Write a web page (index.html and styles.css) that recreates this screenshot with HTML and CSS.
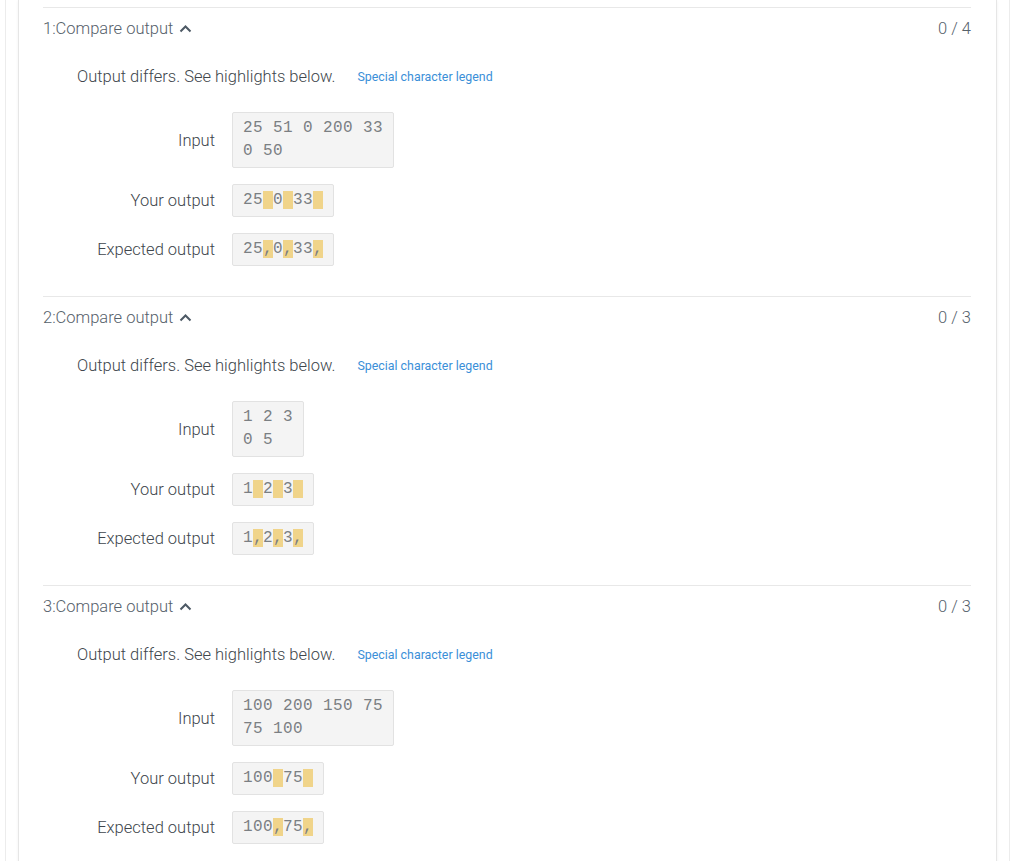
FILE: index.html
```html
<!DOCTYPE html>
<html lang="en">
<head>
  <meta charset="UTF-8">
  <meta name="viewport" content="width=device-width, initial-scale=1.0">
  <title>Compare output</title>
  <link rel="stylesheet" href="styles.css">
</head>
<body>
  <div class="frame">
    <div class="card">

      <section class="test">
        <div class="test-head">
          <span class="test-name">1:Compare output
            <svg class="chevron" width="13" height="9" viewBox="0 0 13 9"><path d="M1.5 7.5 L6.5 2.5 L11.5 7.5" fill="none" stroke="#4d5965" stroke-width="2"/></svg>
          </span>
          <span class="score">0 / 4</span>
        </div>
        <div class="message">
          <span>Output differs. See highlights below.</span>
          <a class="legend" href="#">Special character legend</a>
        </div>
        <div class="rows">
          <div class="row">
            <div class="label">Input</div>
            <pre class="out">25 51 0 200 33
0 50</pre>
          </div>
          <div class="row">
            <div class="label">Your output</div>
            <pre class="out">25<span class="hl"> </span>0<span class="hl"> </span>33<span class="hl"> </span></pre>
          </div>
          <div class="row">
            <div class="label">Expected output</div>
            <pre class="out">25<span class="hl">,</span>0<span class="hl">,</span>33<span class="hl">,</span></pre>
          </div>
        </div>
      </section>

      <section class="test">
        <div class="test-head">
          <span class="test-name">2:Compare output
            <svg class="chevron" width="13" height="9" viewBox="0 0 13 9"><path d="M1.5 7.5 L6.5 2.5 L11.5 7.5" fill="none" stroke="#4d5965" stroke-width="2"/></svg>
          </span>
          <span class="score">0 / 3</span>
        </div>
        <div class="message">
          <span>Output differs. See highlights below.</span>
          <a class="legend" href="#">Special character legend</a>
        </div>
        <div class="rows">
          <div class="row">
            <div class="label">Input</div>
            <pre class="out">1 2 3
0 5</pre>
          </div>
          <div class="row">
            <div class="label">Your output</div>
            <pre class="out">1<span class="hl"> </span>2<span class="hl"> </span>3<span class="hl"> </span></pre>
          </div>
          <div class="row">
            <div class="label">Expected output</div>
            <pre class="out">1<span class="hl">,</span>2<span class="hl">,</span>3<span class="hl">,</span></pre>
          </div>
        </div>
      </section>

      <section class="test">
        <div class="test-head">
          <span class="test-name">3:Compare output
            <svg class="chevron" width="13" height="9" viewBox="0 0 13 9"><path d="M1.5 7.5 L6.5 2.5 L11.5 7.5" fill="none" stroke="#4d5965" stroke-width="2"/></svg>
          </span>
          <span class="score">0 / 3</span>
        </div>
        <div class="message">
          <span>Output differs. See highlights below.</span>
          <a class="legend" href="#">Special character legend</a>
        </div>
        <div class="rows">
          <div class="row">
            <div class="label">Input</div>
            <pre class="out">100 200 150 75
75 100</pre>
          </div>
          <div class="row">
            <div class="label">Your output</div>
            <pre class="out">100<span class="hl"> </span>75<span class="hl"> </span></pre>
          </div>
          <div class="row">
            <div class="label">Expected output</div>
            <pre class="out">100<span class="hl">,</span>75<span class="hl">,</span></pre>
          </div>
        </div>
      </section>

    </div>
  </div>
</body>
</html>
```

FILE: styles.css
```css
body {
  margin: 0;
  background-color: #ffffff;
  font-family: Roboto, "Liberation Sans", sans-serif;
  font-weight: 300;
  color: #474d53;
}
.frame {
  margin-left: 5px;
  width: 1003px;
  border-left: 1px solid #ececec;
  border-right: 1px solid #ececec;
  min-height: 861px;
}
.card {
  margin-left: 12px;
  width: 979px;
  min-height: 861px;
  border-left: 1px solid #e6e6e6;
  border-right: 1px solid #e6e6e6;
  box-shadow: 0 1px 3px rgba(0, 0, 0, 0.06);
  padding: 7px 25px 0 24px;
  box-sizing: border-box;
}
.test {
  border-top: 1px solid #e8e8e8;
  padding: 8px 0 30px;
}
.test-head {
  display: flex;
  justify-content: space-between;
  align-items: center;
  height: 24px;
  font-size: 16.5px;
  color: #56616b;
}
.test-name {
  display: flex;
  align-items: center;
}
.chevron {
  margin-left: 6px;
}
.message {
  display: flex;
  align-items: center;
  height: 24px;
  margin: 24px 0 24px 34px;
  font-size: 16.5px;
  color: #40464c;
}
.legend {
  margin-left: 22px;
  font-size: 12.4px;
  font-weight: 400;
  color: #3b8fd8;
  text-decoration: none;
}
.rows {
  display: flex;
  flex-direction: column;
  gap: 16px;
}
.row {
  display: flex;
  align-items: center;
}
.label {
  width: 172px;
  text-align: right;
  margin-right: 17px;
  font-size: 16.5px;
  color: #40464c;
}
.out {
  margin: 0;
  padding: 4px 10px;
  background-color: #f4f4f4;
  border: 1px solid #e2e2e2;
  border-radius: 2px;
  font-family: "Liberation Mono", monospace;
  font-size: 16px;
  line-height: 23px;
  letter-spacing: 0.4px;
  color: #7b7f83;
}
.hl {
  background-color: #f0d48a;
}
```
